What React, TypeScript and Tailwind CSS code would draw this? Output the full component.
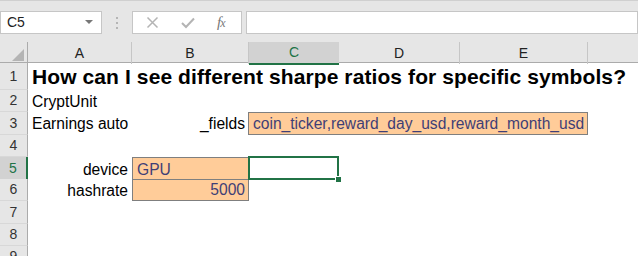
import React from "react";

const cols = "grid grid-cols-[28px_104px_117px_90px_121px_128px_1fr]";
const font = { fontFamily: '"Liberation Sans", Arial, sans-serif' };

function RowHead({ n, sel }: { n: number; sel?: boolean }) {
  return (
    <div
      className={
        "flex items-center justify-center text-[14px] border-b border-[#d8d8d8] " +
        (sel
          ? "bg-[#d2d2d2] text-[#217346] border-r-2 border-r-[#217346]"
          : "bg-[#e6e6e6] text-[#333] border-r border-r-[#ababab]")
      }
    >
      {n}
    </div>
  );
}

export default function App() {
  const heights = [27, 22, 23, 22, 22, 22, 23, 22, 22];
  return (
    <div className="w-[638px] h-[256px] overflow-hidden bg-white" style={font}>
      {/* toolbar */}
      <div className="h-[42px] bg-[#e6e6e6] border-t border-[#d0d0d0] pt-[10px] flex items-start">
        <div className="w-[102px] h-[23px] bg-white border border-[#c6c6c6] flex items-center justify-between pl-[6px] pr-[8px] text-[14px] text-[#222]">
          <span>C5</span>
          <svg width="8" height="5" viewBox="0 0 8 5">
            <path d="M0 0 L8 0 L4 4 Z" fill="#777" />
          </svg>
        </div>
        <div className="w-[30px] h-[23px] flex flex-col items-center justify-center gap-[3px]">
          <div className="w-[2px] h-[2px] bg-[#b5b5b5]" />
          <div className="w-[2px] h-[2px] bg-[#b5b5b5]" />
          <div className="w-[2px] h-[2px] bg-[#b5b5b5]" />
        </div>
        <div className="w-[110px] h-[23px] bg-white border border-[#c6c6c6] flex items-center">
          <svg className="ml-[13px]" width="13" height="13" viewBox="0 0 13 13">
            <path d="M1.5 1.5 L11.5 11.5 M11.5 1.5 L1.5 11.5" stroke="#b4b4b4" strokeWidth="1.5" />
          </svg>
          <svg className="ml-[22px]" width="14" height="12" viewBox="0 0 14 12">
            <path d="M1 6 L5 10 L13 1.5" stroke="#b4b4b4" strokeWidth="2" fill="none" />
          </svg>
          <span
            className="ml-[22px] text-[15px] italic text-[#777] leading-none tracking-[-1px]"
            style={{ fontFamily: '"Liberation Serif", "Times New Roman", serif' }}
          >
            f<span className="text-[12px]">x</span>
          </span>
        </div>
        <div className="ml-[4px] flex-1 h-[23px] bg-white border border-[#c6c6c6]" />
      </div>

      {/* column header */}
      <div className={cols + " h-[21px] bg-[#e6e6e6] border-b border-[#ababab] text-[14px] text-[#222]"}>
        <div className="relative border-r border-[#ababab]">
          <svg className="absolute right-[3px] bottom-[3px]" width="12" height="12" viewBox="0 0 12 12">
            <path d="M12 0 L12 12 L0 12 Z" fill="#b4b4b4" />
          </svg>
        </div>
        <div className="flex items-center justify-center border-r border-[#c6c6c6]">A</div>
        <div className="flex items-center justify-center border-r border-[#c6c6c6]">B</div>
        <div className="flex items-center justify-center bg-[#d2d2d2] text-[#217346] border-b-2 border-[#217346] -mb-[1px]">C</div>
        <div className="flex items-center justify-center border-r border-[#c6c6c6]">D</div>
        <div className="flex items-center justify-center border-r border-[#c6c6c6]">E</div>
        <div />
      </div>

      {/* rows */}
      <div className="text-[15.6px] text-black">
        {/* row 1 */}
        <div className={cols} style={{ height: heights[0] }}>
          <RowHead n={1} />
          <div className="col-span-6 flex items-end pl-[4px] pb-[1px] whitespace-nowrap font-bold text-[21px] leading-none tracking-[0.1px]">
            <span className="pb-[2px]">How can I see different sharpe ratios for specific symbols?</span>
          </div>
        </div>
        {/* row 2 */}
        <div className={cols} style={{ height: heights[1] }}>
          <RowHead n={2} />
          <div className="col-span-6 flex items-end pl-[4px] pb-[2px] whitespace-nowrap leading-none">CryptUnit</div>
        </div>
        {/* row 3 */}
        <div className={cols} style={{ height: heights[2] }}>
          <RowHead n={3} />
          <div className="flex items-end pl-[4px] pb-[3px] whitespace-nowrap leading-none">Earnings auto</div>
          <div className="flex items-end justify-end pr-[4px] pb-[3px] whitespace-nowrap leading-none">_fields</div>
          <div className="col-span-3 bg-[#ffcc99] border border-[#7f7f7f] -ml-[1px] flex items-end pl-[4px] pb-[2px] whitespace-nowrap leading-none text-[#3f3f76]">
            coin_ticker,reward_day_usd,reward_month_usd
          </div>
          <div />
        </div>
        {/* row 4 */}
        <div className={cols} style={{ height: heights[3] }}>
          <RowHead n={4} />
        </div>
        {/* row 5 */}
        <div className={cols} style={{ height: heights[4] }}>
          <RowHead n={5} sel />
          <div className="flex items-end justify-end pr-[4px] pb-[2px] whitespace-nowrap leading-none">device</div>
          <div className="bg-[#ffcc99] border-t border-l border-r border-[#7f7f7f] flex items-end pl-[4px] pb-[2px] leading-none text-[#3f3f76]">GPU</div>
          <div className="relative -ml-[1px] -mt-[1px] h-[24px] border-2 border-[#217346]">
            <div className="absolute -right-[5px] -bottom-[5px] w-[7px] h-[7px] bg-[#217346] border border-white" />
          </div>
          <div />
        </div>
        {/* row 6 */}
        <div className={cols} style={{ height: heights[5] }}>
          <RowHead n={6} />
          <div className="flex items-end justify-end pr-[4px] pb-[2px] whitespace-nowrap leading-none">hashrate</div>
          <div className="bg-[#ffcc99] border border-[#7f7f7f] flex items-end justify-end pr-[3px] pb-[2px] leading-none text-[#3f3f76]">5000</div>
          <div />
        </div>
        {/* rows 7-9 */}
        {[7, 8, 9].map((n) => (
          <div key={n} className={cols} style={{ height: heights[n - 1] }}>
            <RowHead n={n} />
          </div>
        ))}
      </div>
    </div>
  );
}
